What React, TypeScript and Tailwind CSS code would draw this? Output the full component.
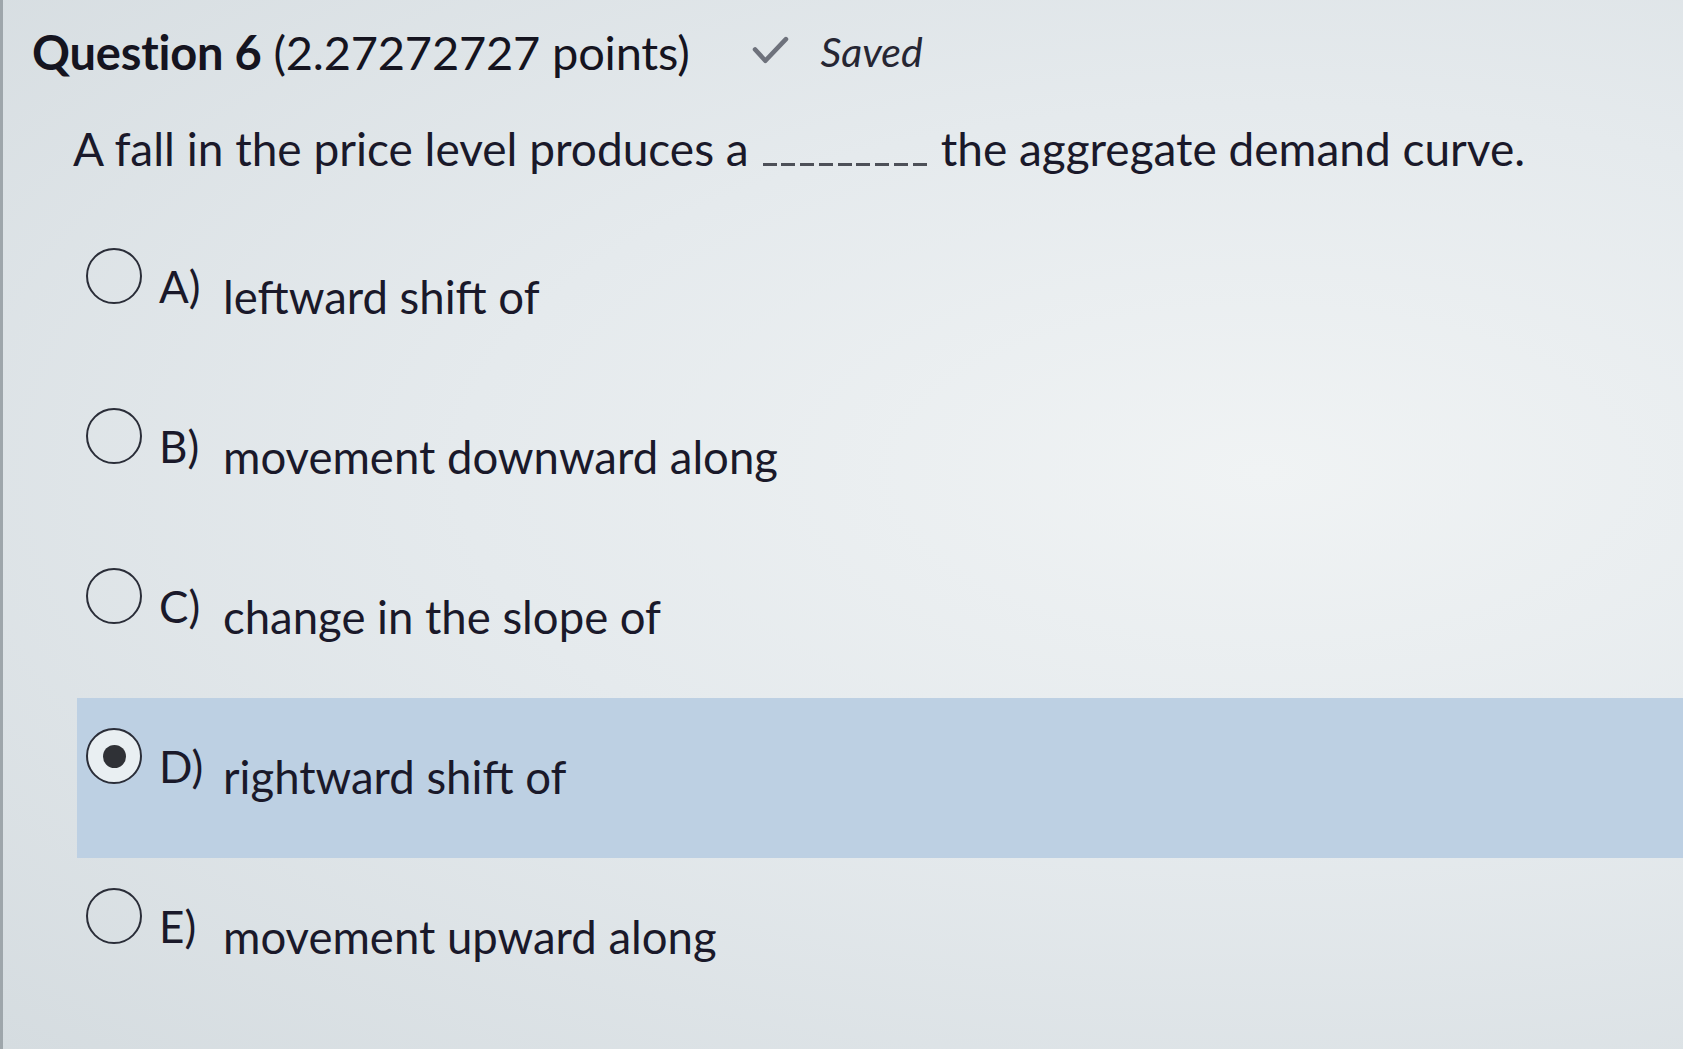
import React from "react";

const options = [
  { letter: "A)", text: "leftward shift of" },
  { letter: "B)", text: "movement downward along" },
  { letter: "C)", text: "change in the slope of" },
  { letter: "D)", text: "rightward shift of", selected: true },
  { letter: "E)", text: "movement upward along" },
];

function Radio({ selected }: { selected?: boolean }) {
  return (
    <div
      className={
        "w-[56px] h-[56px] shrink-0 rounded-full border-[2.5px] border-[#2a2d38] flex items-center justify-center " +
        (selected ? "bg-[#e9eff2]" : "bg-transparent")
      }
    >
      {selected && <div className="w-[23px] h-[23px] rounded-full bg-[#2f3136]" />}
    </div>
  );
}

export default function App() {
  return (
    <div
      className="w-[1683px] h-[1049px] overflow-hidden border-l-[3px] border-[#9ea6ab] bg-[radial-gradient(ellipse_at_75%_45%,#f0f3f4_0%,#e5eaed_45%,#d5dce0_100%)] text-[#1a192a]"
      style={{ fontFamily: "Lato, 'Noto Sans', sans-serif" }}
    >
      <div className="flex items-center pt-[24px] pl-[29px] h-[80px]">
        <h1 className="text-[47px] leading-[56px] tracking-[-0.2px] text-[#15141f]">
          <span className="font-bold">Question 6</span>{" "}
          <span className="font-normal">(2.27272727 points)</span>
        </h1>
        <svg
          className="ml-[62px] mt-[-4px]"
          width="37"
          height="29"
          viewBox="0 0 36 28"
          fill="none"
          stroke="#6e727c"
          strokeWidth="4.5"
          strokeLinecap="round"
          strokeLinejoin="round"
        >
          <path d="M3 13 L13 24 L33 3" />
        </svg>
        <span className="ml-[32px] text-[41px] italic leading-[52px] text-[#262633]">Saved</span>
      </div>

      <div className="flex items-end pl-[70px] mt-[40px] h-[58px] text-[46px] leading-[58px]">
        <span>A fall in the price level produces a</span>
        <span className="ml-[14px] mb-[12px] w-[164px] flex justify-between">
          {Array.from({ length: 9 }).map((_, i) => (
            <span key={i} className="block w-[14px] h-[3px] bg-[#4d5058]" />
          ))}
        </span>
        <span className="ml-[14px]">the aggregate demand curve.</span>
      </div>

      <div className="ml-[74px] mt-[40px]">
        {options.map((o) => (
          <div
            key={o.letter}
            className={
              "flex items-start h-[160px] pl-[9px] pt-[30px] " +
              (o.selected ? "bg-[#bdd0e3]" : "")
            }
          >
            <Radio selected={o.selected} />
            <span className="ml-[17px] mt-[12px] text-[44px] leading-[52px] w-[64px]">{o.letter}</span>
            <span className="mt-[22px] text-[45.5px] leading-[54px]">{o.text}</span>
          </div>
        ))}
      </div>
    </div>
  );
}
